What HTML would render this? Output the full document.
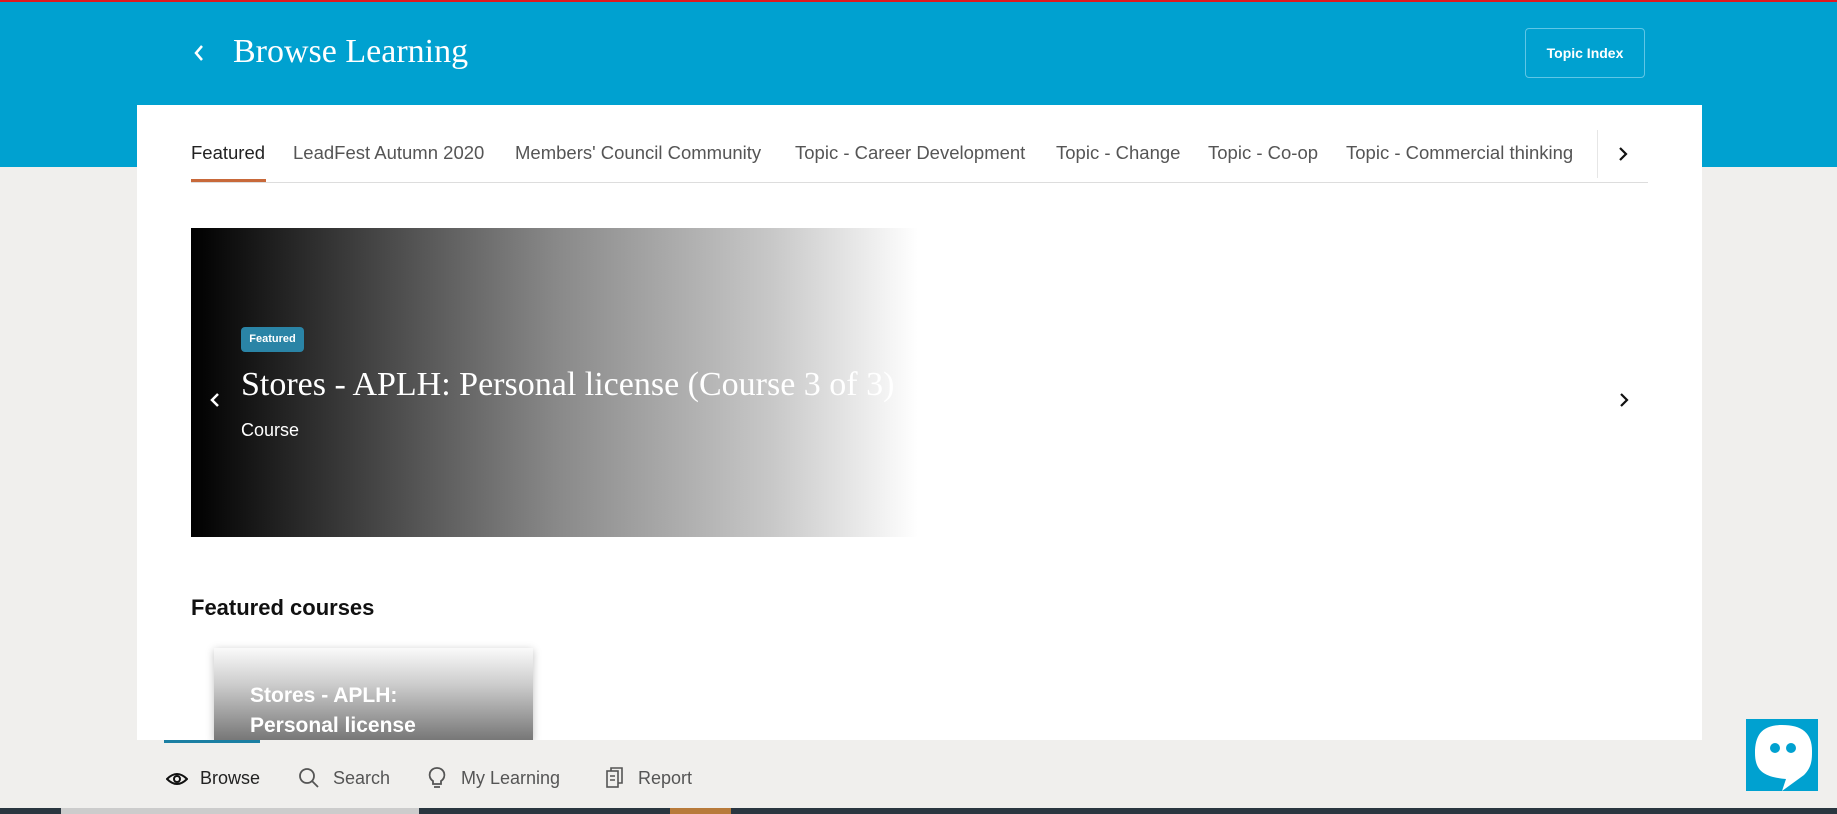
<!DOCTYPE html>
<html><head><style>
*{margin:0;padding:0;box-sizing:border-box}
body{width:1837px;height:814px;overflow:hidden;background:#f0efed;font-family:"Liberation Sans",sans-serif;position:relative}
.abs{position:absolute}
.hdr{left:0;top:0;width:1837px;height:167px;background:#00a1d0;border-top:2px solid #e0191f}
.card{left:137px;top:105px;width:1565px;height:635px;background:#fff}
.tab{position:absolute;top:142px;font-size:18.5px;color:#555;white-space:nowrap}
</style></head><body>
<div class="abs hdr"></div>
<svg class="abs" style="left:192px;top:44px" width="14" height="18"><path d="M10 2 L4 9 L10 16" stroke="#fff" stroke-width="2.5" fill="none"/></svg>
<div class="abs" style="left:233px;top:33px;font-family:'Liberation Serif',serif;font-size:34px;color:#fff">Browse Learning</div>
<div class="abs" style="left:1525px;top:28px;width:120px;height:50px;border:1px solid #5fc6e6;border-radius:4px;color:#fff;font-size:14px;font-weight:bold;text-align:center;line-height:48px">Topic Index</div>
<div class="abs card"></div>
<div class="tab" style="left:191px;color:#222">Featured</div>
<div class="tab" style="left:293px">LeadFest Autumn 2020</div>
<div class="tab" style="left:515px">Members' Council Community</div>
<div class="tab" style="left:795px">Topic - Career Development</div>
<div class="tab" style="left:1056px">Topic - Change</div>
<div class="tab" style="left:1208px">Topic - Co-op</div>
<div class="tab" style="left:1346px">Topic - Commercial thinking</div>
<div class="abs" style="left:1597px;top:130px;width:1px;height:48px;background:#e6e6e6"></div>
<svg class="abs" style="left:1616px;top:145px" width="14" height="18"><path d="M4 3 L10 9 L4 15" stroke="#111" stroke-width="2.2" fill="none"/></svg>
<div class="abs" style="left:191px;top:182px;width:1457px;height:1px;background:#ddd"></div>
<div class="abs" style="left:191px;top:179px;width:75px;height:3px;background:#c8693a"></div>
<div class="abs" style="left:191px;top:228px;width:727px;height:309px;background:linear-gradient(to right,#000 0%,#444 25%,#888 50%,#c8c8c8 80%,#fff 100%)"></div>
<svg class="abs" style="left:208px;top:391px" width="14" height="18"><path d="M10 3 L4 9 L10 15" stroke="#fff" stroke-width="2.5" fill="none"/></svg>
<svg class="abs" style="left:1617px;top:391px" width="14" height="18"><path d="M4 3 L10 9 L4 15" stroke="#111" stroke-width="2.2" fill="none"/></svg>
<div class="abs" style="left:241px;top:327px;width:63px;height:25px;background:#2a84a6;border-radius:4px;color:#fff;font-size:11px;font-weight:bold;text-align:center;line-height:25px">Featured</div>
<div class="abs" style="left:241px;top:366px;font-family:'Liberation Serif',serif;font-size:34px;color:#fff;white-space:nowrap">Stores - APLH: Personal license (Course 3 of 3)</div>
<div class="abs" style="left:241px;top:420px;font-size:18px;color:#fff">Course</div>
<div class="abs" style="left:191px;top:595px;font-size:22px;font-weight:bold;color:#111">Featured courses</div>
<div class="abs" style="left:214px;top:648px;width:319px;height:92px;background:linear-gradient(#fafafa,#ccc 40%,#777);box-shadow:0 2px 8px rgba(0,0,0,.25)"></div>
<div class="abs" style="left:250px;top:681px;font-size:21px;font-weight:bold;color:#fff;line-height:30px">Stores - APLH:<br>Personal license</div>
<div class="abs" style="left:0;top:740px;width:1837px;height:74px;background:#f0efed"></div>
<div class="abs" style="left:164px;top:740px;width:96px;height:3px;background:#1b7fa3"></div>
<svg class="abs" style="left:166px;top:769px" width="22" height="20"><path d="M1 10 Q11 0 21 10 Q11 20 1 10Z" stroke="#111" stroke-width="2" fill="none"/><circle cx="11" cy="10" r="3" stroke="#111" stroke-width="2" fill="none"/></svg>
<div class="abs" style="left:200px;top:768px;font-size:18px;color:#222">Browse</div>
<svg class="abs" style="left:298px;top:767px" width="22" height="22"><circle cx="9" cy="9" r="7" stroke="#555" stroke-width="1.8" fill="none"/><path d="M14 14 L20 20" stroke="#555" stroke-width="1.8"/></svg>
<div class="abs" style="left:333px;top:768px;font-size:18px;color:#555">Search</div>
<svg class="abs" style="left:428px;top:766px" width="18" height="24"><path d="M9 2 A7 7 0 0 0 5 15 L5 18 L13 18 L13 15 A7 7 0 0 0 9 2Z M6 21 L12 21" stroke="#555" stroke-width="1.8" fill="none"/></svg>
<div class="abs" style="left:461px;top:768px;font-size:18px;color:#555">My Learning</div>
<svg class="abs" style="left:605px;top:766px" width="20" height="24"><rect x="2" y="5" width="11" height="16" stroke="#555" stroke-width="1.6" fill="none"/><path d="M6 5 L6 2 L17 2 L17 17 L13 17 M5 10 L10 10 M5 14 L10 14" stroke="#555" stroke-width="1.6" fill="none"/></svg>
<div class="abs" style="left:638px;top:768px;font-size:18px;color:#555">Report</div>
<div class="abs" style="left:0;top:808px;width:1837px;height:6px;background:#2a3640"></div>
<div class="abs" style="left:61px;top:808px;width:358px;height:6px;background:#ccc"></div>
<div class="abs" style="left:670px;top:808px;width:61px;height:6px;background:#b87a3a"></div>
<div class="abs" style="left:1746px;top:719px;width:72px;height:72px;background:#00a1d0"></div>
<svg class="abs" style="left:1746px;top:719px" width="72" height="72"><path d="M36 6 C16 6 9 16 9 34 C9 52 18 58 40 60 L36 72 L58 56 C66 48 66 40 66 32 C66 14 56 6 36 6Z" fill="#fff"/><circle cx="29" cy="29" r="5" fill="#00a1d0"/><circle cx="45" cy="29" r="5" fill="#00a1d0"/></svg>
</body></html>
